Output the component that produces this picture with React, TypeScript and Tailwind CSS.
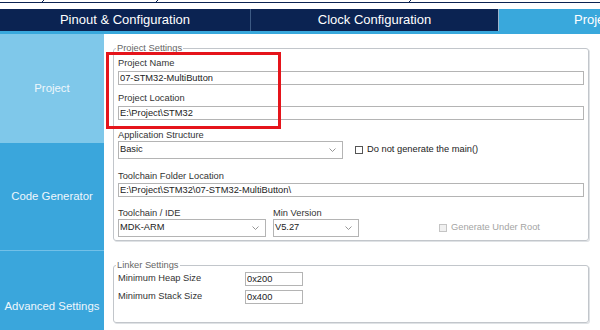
import { ReactNode } from "react";

function Chevron() {
  return (
    <svg width="7" height="4" viewBox="0 0 7 4" className="shrink-0">
      <path d="M0.5 0.5 L3.5 3.5 L6.5 0.5" fill="none" stroke="#8a8a8a" strokeWidth="0.9" />
    </svg>
  );
}

function Field({ value, className = "" }: { value: string; className?: string }) {
  return (
    <input
      readOnly
      value={value}
      className={`block h-[14px] border border-[#b4b4b4] bg-white px-[1px] text-[9.3px] leading-[12px] text-[#222] outline-none ${className}`}
    />
  );
}

function Select({ value, className = "" }: { value: string; className?: string }) {
  return (
    <div
      className={`flex h-[18px] items-center justify-between border border-[#b4b4b4] bg-white pl-[1px] pr-[6px] text-[9.3px] text-[#222] ${className}`}
    >
      <span>{value}</span>
      <Chevron />
    </div>
  );
}

function Check({ label, disabled = false }: { label: string; disabled?: boolean }) {
  return (
    <div className="flex h-[18px] items-center gap-[4px]">
      <span
        className={`h-[8px] w-[8px] border ${disabled ? "border-[#c4c4c4] bg-[#f0f0f0]" : "border-[#555] bg-white"}`}
      />
      <span className={`text-[9.3px] ${disabled ? "text-[#a4a4a4]" : "text-[#222]"}`}>{label}</span>
    </div>
  );
}

function Label({ children, className = "" }: { children: ReactNode; className?: string }) {
  return <div className={`h-[11px] text-[9.3px] leading-[11px] text-[#333] ${className}`}>{children}</div>;
}

function Group({ title, className = "", children }: { title: string; className?: string; children: ReactNode }) {
  return (
    <fieldset
      className={`rounded-[3px] border border-[#c2c6cb] shadow-[1px_1px_0_#dfe2e5] ${className}`}
    >
      <legend className="ml-[2px] px-[1px] text-[9.3px] leading-[11px] text-[#666]">{title}</legend>
      {children}
    </fieldset>
  );
}

export default function App() {
  return (
    <div className="relative h-[330px] w-[600px] overflow-hidden bg-white font-['Liberation_Sans',Arial,sans-serif]">
      <svg width="600" height="9" className="block">
        <line x1="0" y1="2.5" x2="600" y2="2.5" stroke="#0b2352" strokeWidth="1.2" />
        <line x1="44" y1="0" x2="41" y2="3" stroke="#0b2352" strokeWidth="1" />
        <line x1="158" y1="0" x2="155" y2="3" stroke="#0b2352" strokeWidth="1" />
        <line x1="411" y1="0" x2="408" y2="3" stroke="#0b2352" strokeWidth="1" />
      </svg>

      <div className="flex h-[22px] text-[13px] text-white">
        <div className="flex w-[251px] shrink-0 items-center justify-center border-r border-[#3d5a84] bg-[#0b2352]">
          Pinout &amp; Configuration
        </div>
        <div className="flex w-[248px] shrink-0 items-center justify-center border-r border-[#9fb4cc] bg-[#0b2352]">
          Clock Configuration
        </div>
        <div className="flex min-w-0 flex-1 items-center overflow-hidden whitespace-nowrap bg-[#39a8dc] pl-[75px]">
          Project Manager
        </div>
      </div>
      <div className="h-[3px] bg-[#39a8dc]" />

      <div className="flex h-[296px]">
        <div className="flex w-[104px] shrink-0 flex-col overflow-hidden text-[11.4px] text-[#eef7fc]">
          <div className="flex h-[109px] shrink-0 items-center justify-center bg-[#7fc8ea]">Project</div>
          <div className="flex h-[107px] shrink-0 items-center justify-center bg-[#3aa6dc]">Code Generator</div>
          <div className="flex h-[112px] shrink-0 items-center justify-center border-t border-[#72c0e8] bg-[#3aa6dc]">
            Advanced Settings
          </div>
        </div>

        <div className="flex-1 pl-[9px] pr-[11px] pt-[9px]">
          <Group title="Project Settings">
            <div className="px-[4px] pb-[3px] pt-[4px]">
              <Label>Project Name</Label>
              <Field value="07-STM32-MultiButton" className="mt-[2px] w-full" />
              <Label className="mt-[8px]">Project Location</Label>
              <Field value="E:\Project\STM32" className="mt-[2px] w-full" />
              <Label className="mt-[10px]">Application Structure</Label>
              <div className="flex items-center gap-[12px]">
                <Select value="Basic" className="w-[225px]" />
                <Check label="Do not generate the main()" />
              </div>
              <Label className="mt-[12px]">Toolchain Folder Location</Label>
              <Field value="E:\Project\STM32\07-STM32-MultiButton\" className="mt-[1px] w-full" />
              <div className="mt-[11px] flex items-end gap-[7px]">
                <div className="w-[148px]">
                  <Label>Toolchain / IDE</Label>
                  <Select value="MDK-ARM" />
                </div>
                <div className="w-[86px]">
                  <Label>Min Version</Label>
                  <Select value="V5.27" />
                </div>
                <div className="ml-[73px]">
                  <Check label="Generate Under Root" disabled />
                </div>
              </div>
            </div>
          </Group>

          <Group title="Linker Settings" className="mt-[19px]">
            <div className="px-[4px] pb-[18px] pt-[1px]">
              <div className="flex items-center">
                <div className="w-[127px] text-[9.3px] text-[#333]">Minimum Heap Size</div>
                <Field value="0x200" className="w-[58px]" />
              </div>
              <div className="mt-[4px] flex items-center">
                <div className="w-[127px] text-[9.3px] text-[#333]">Minimum Stack Size</div>
                <Field value="0x400" className="w-[58px]" />
              </div>
            </div>
          </Group>
        </div>
      </div>

      <div className="absolute left-[106px] top-[52px] h-[77px] w-[175px] border-[3px] border-[#e5141b]" />
    </div>
  );
}
